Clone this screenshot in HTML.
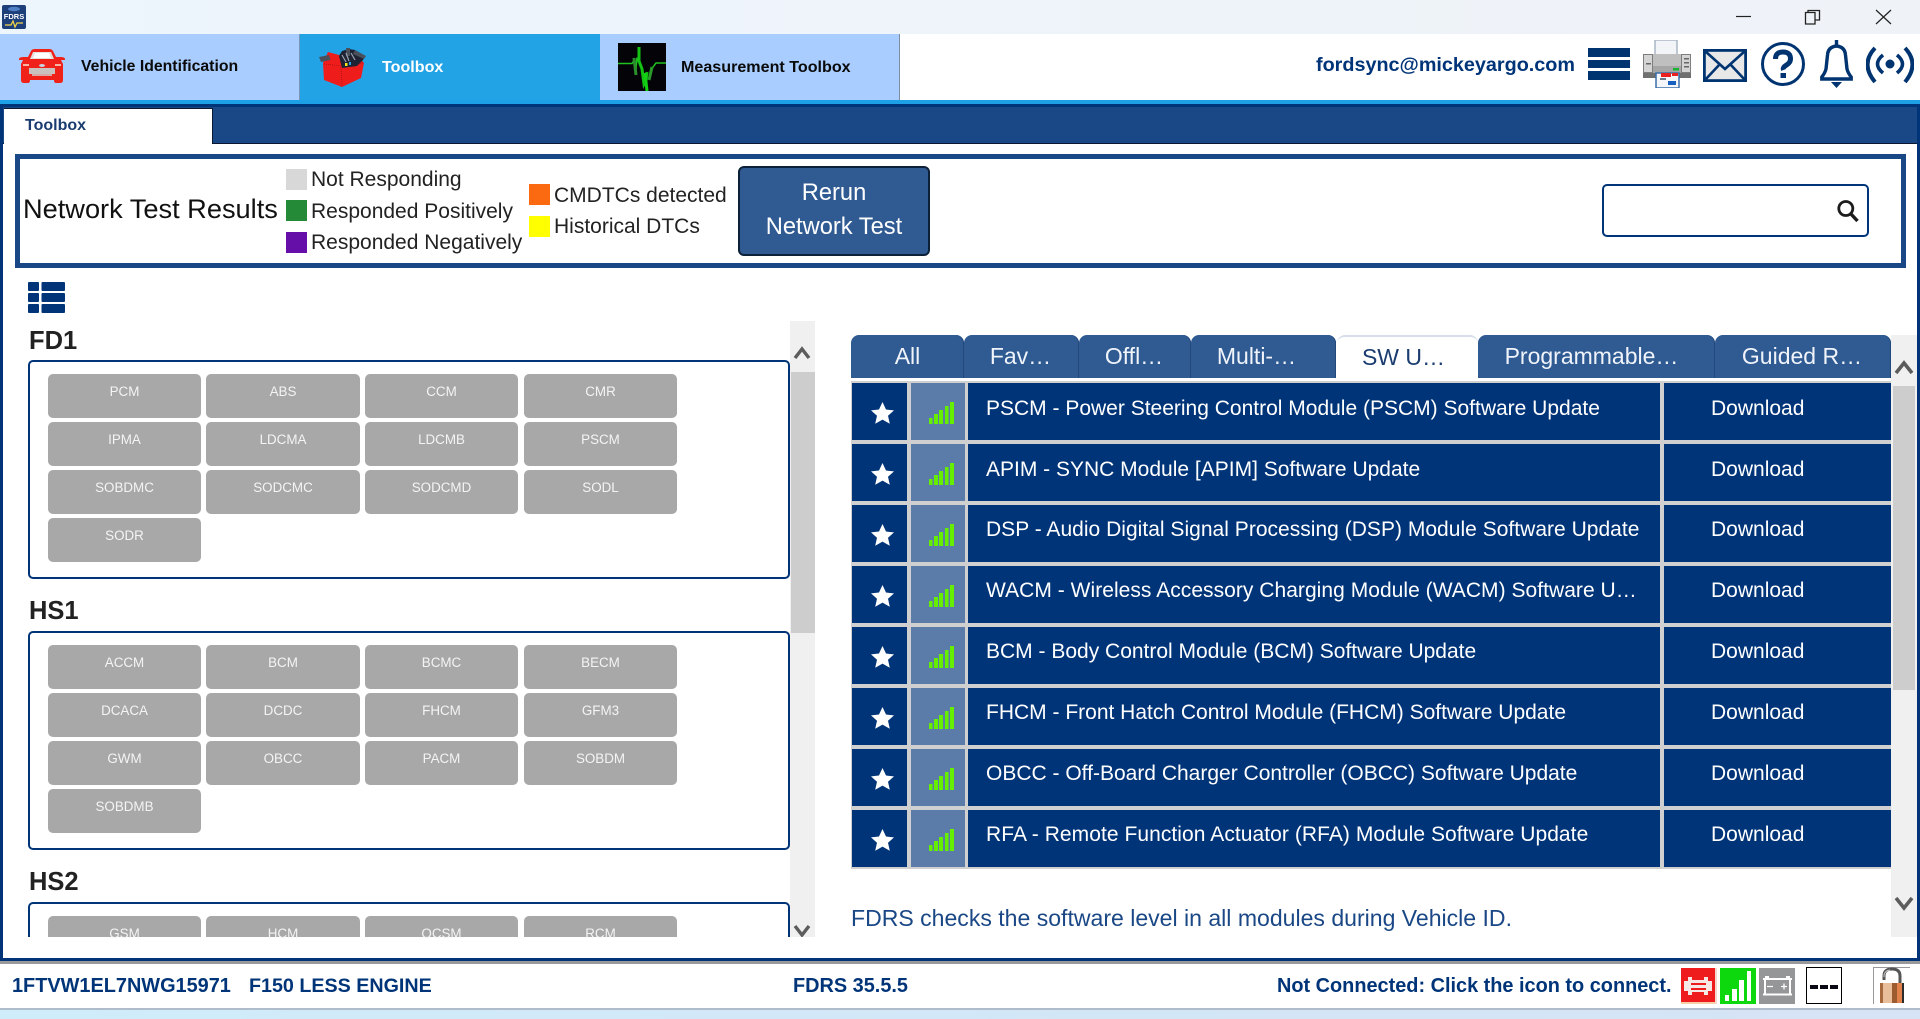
<!DOCTYPE html>
<html><head><meta charset="utf-8"><title>FDRS</title>
<style>
html,body{margin:0;padding:0;background:#fff;width:1920px;height:1019px;overflow:hidden}
#w{position:absolute;left:0;top:0;width:1920px;height:1019px;overflow:hidden}
body{font-family:"Liberation Sans",Arial,sans-serif}
.a,.t,.b,.r,.tab,svg{position:absolute}
.t{white-space:nowrap}
.b{width:153px;height:44px;background:#a8a8a8;border-radius:5px;color:#f4f4f4;font-size:13.4px;line-height:36px;text-align:center}
.c2{width:154px}
.cut{height:21px;border-radius:5px 5px 0 0}
.box{position:absolute;left:28px;width:758px;height:215px;border:2px solid #003478;border-radius:5px}
.h{position:absolute;left:29px;font-weight:bold;font-size:25.5px;line-height:30px;color:#222}
.tab{top:335px;height:43px;background:#2f5a92;border-radius:8px 8px 0 0;color:#f0f4fa;font-size:23px;line-height:42px;text-align:center;box-sizing:border-box;box-shadow:inset -1px 0 0 #23497c}
.sq{position:absolute;width:21px;height:21px}
.lg{position:absolute;font-size:21px;line-height:26px;color:#222;white-space:nowrap}
.r{left:852px;width:1039px;height:57px;background:#003478;color:#fff;font-size:21px}
.r i{position:absolute;top:0;height:57px;width:4px;background:#d0d0d0}
.r i.m{width:3px}
.r u{position:absolute;left:59px;top:0;width:54px;height:57px;background:#5b7ca8}
.r span{position:absolute;top:11px;line-height:28px;white-space:nowrap}
.r.p span{top:12px}
.r .n{left:134px}.r .d{left:859px}
.st{color:#003478;font-weight:bold;font-size:19.9px;line-height:24px}
</style></head><body><div id="w">

<!-- title bar -->
<div class="a" style="left:0;top:0;width:1920px;height:34px;background:linear-gradient(90deg,#edf5fd,#eff2f7)"></div>
<svg style="left:2px;top:5px" width="24" height="24" viewBox="0 0 24 24"><rect width="24" height="24" rx="2" fill="#1d3f7a"/><ellipse cx="12" cy="4" rx="6" ry="2.2" fill="#4f7fc4"/><text x="12" y="14" font-size="7.5" font-weight="bold" fill="#fff" text-anchor="middle" font-family="Liberation Sans">FDRS</text><path d="M3 20h6l2-4 2 6 2-4h6" fill="none" stroke="#f4d64a" stroke-width="1.2"/></svg>
<svg style="left:1730px;top:5px" width="180" height="24" viewBox="0 0 180 24"><path d="M6 11.500h15" stroke="#222" stroke-width="1.2"/><path d="M75.500 7.500h9.500v11.500h-9.500zM78 7.500V5.500h11.500v9.500h-4.500" fill="none" stroke="#222" stroke-width="1.300"/><path d="M146 5l15 14M161 5l-15 14" stroke="#222" stroke-width="1.200"/></svg>

<!-- nav -->
<div class="a" style="left:0;top:34px;width:1920px;height:66px;background:#fff"></div>
<div class="a" style="left:0;top:34px;width:299px;height:66px;background:#a9cdfe"></div>
<div class="a" style="left:299px;top:34px;width:301px;height:66px;background:#22a3e6;border-left:1px solid #7a97b8;box-sizing:border-box"></div>
<div class="a" style="left:600px;top:34px;width:300px;height:66px;background:#a9cdfe;border-right:1px solid #7f8fa3;box-sizing:border-box"></div>
<div class="a" style="left:0;top:100px;width:1920px;height:4px;background:#1ea0e6"></div>

<svg style="left:19px;top:49px" width="46" height="34" viewBox="0 0 46 34"><path d="M9 8L12 2Q13 0 16 0H30Q33 0 34 2L37 8H41Q46 8 46 10V11H42L44 15V31Q44 34 41 34H37Q35 34 35 31H11Q11 34 9 34H5Q2 34 2 31V15L4 11H0V10Q0 8 5 8Z" fill="#ef2118"/><path d="M11 10L14 3H32L35 10Z" fill="#e4e0dc"/><path d="M16 4H30L32 9H14Z" fill="#fff"/><rect x="10" y="19" width="26" height="6" fill="#c9c2be"/><rect x="13" y="25" width="20" height="2" fill="#d8a9a4"/><ellipse cx="23" cy="16.500" rx="3" ry="1.500" fill="#c7d2e2"/><rect x="4" y="15" width="6" height="2" fill="#f7b5a5"/><rect x="36" y="15" width="6" height="2" fill="#f7b5a5"/></svg>
<div class="t" style="left:81px;top:55px;font-weight:bold;font-size:15.8px;line-height:24px;color:#0a0a0a">Vehicle Identification</div>

<svg style="left:319px;top:48px" width="47" height="40" viewBox="0 0 47 40"><path d="M9 4L20 7H38L45 15 42 30 23 39 5 32 4 15Z" fill="#ef1c1c"/><path d="M23 38L22 18M5 16L22 18L44 15" fill="none" stroke="#a81414" stroke-width=".8" stroke-dasharray="1 1"/><path d="M20 8L23 3 30 1 36 2 46 8 44 12 38 18 23 20Z" fill="#1e2233"/><path d="M0 9L10 7 11.500 12 2 14ZM36 2L47 8 45 11 34 6ZM27 0H31V8H27Z" fill="#4a4f5c"/><rect x="26" y="15" width="2.500" height="3" fill="#f5e71a"/><rect x="30" y="14" width="2" height="3" fill="#2aa0e0"/><path d="M23 7L27 14M27 5L30 13M32 5L36 12" stroke="#9aa3ad" stroke-width="1.200"/></svg>
<div class="t" style="left:382px;top:55px;font-weight:bold;font-size:16.1px;line-height:24px;color:#fff">Toolbox</div>

<svg style="left:618px;top:43px" width="48" height="48" viewBox="0 0 48 48"><rect width="48" height="48" fill="#040408"/><path d="M0 20.500h14l2-3 2 9 1-12M31 36l2-7 2-5 3-4h10" fill="none" stroke="#1fc21f" stroke-width="1.500"/><path d="M16 15l2 17" stroke="#2b8f2b" stroke-width="3"/><path d="M21 4V18l3 8 2 15 2-4 1-8" fill="none" stroke="#13c213" stroke-width="3"/><path d="M27 30l2 18" stroke="#13d213" stroke-width="3"/><path d="M31 37l3-13" stroke="#2a9a2a" stroke-width="3"/></svg>
<div class="t" style="left:681px;top:55px;font-weight:bold;font-size:16.1px;line-height:24px;color:#0a0a0a">Measurement Toolbox</div>

<div class="t" style="left:1316px;top:53px;font-weight:bold;font-size:19.8px;line-height:24px;color:#003478">fordsync@mickeyargo.com</div>
<div class="a" style="left:1588px;top:48px;width:42px;height:9px;background:#003470"></div>
<div class="a" style="left:1588px;top:60px;width:42px;height:8px;background:#003470"></div>
<div class="a" style="left:1588px;top:71px;width:42px;height:9px;background:#003470"></div>

<svg style="left:1643px;top:40px" width="48" height="48" viewBox="0 0 48 48"><rect x="12" y="0" width="22" height="17" fill="#f2f4f8" stroke="#a9b5c4" stroke-width="1.500"/><rect x="0" y="14" width="48" height="24" fill="#7e7e7e"/><rect x="10" y="14" width="28" height="24" fill="#a6a6a6"/><rect x="10" y="14" width="28" height="12" fill="#bfbfbf"/><rect x="1" y="15" width="8" height="17" fill="#d4d4d4"/><rect x="39" y="15" width="8" height="17" fill="#d4d4d4"/><rect x="3" y="23" width="5" height="1.500" fill="#666"/><rect x="41" y="18" width="5" height="1.500" fill="#666"/><rect x="41" y="22" width="5" height="1.500" fill="#666"/><rect x="41" y="26" width="5" height="1.500" fill="#666"/><rect x="30" y="28" width="6" height="2.500" fill="#15b530"/><rect x="0" y="33" width="48" height="5" fill="#6f6f6f"/><rect x="13" y="33" width="23" height="15" fill="#f4f6fa" stroke="#3b6fa8" stroke-width="1.500"/><rect x="18" y="33" width="10" height="4" fill="#ea2020"/><rect x="29" y="33" width="6" height="3" fill="#ea2020"/><rect x="17" y="38" width="6" height="2" fill="#6b7a8a"/><rect x="25" y="41" width="8" height="4" fill="#1860c0"/></svg>

<svg style="left:1703px;top:49px" width="44" height="33" viewBox="0 0 44 33"><rect x="1.400" y="1.400" width="41.200" height="30.200" fill="#e8e8e8" stroke="#003470" stroke-width="2.800"/><path d="M2 2L22 20 42 2M2 31L17 15M42 31L27 15" fill="none" stroke="#003470" stroke-width="2.600"/></svg>

<svg style="left:1761px;top:42px" width="44" height="44" viewBox="0 0 44 44"><circle cx="22" cy="22" r="20.500" fill="#fff" stroke="#003470" stroke-width="3"/><path d="M14.500 17Q14.500 10 22 10T29.500 17Q29.500 20.500 25.500 23T22.500 28" fill="none" stroke="#003470" stroke-width="5"/><rect x="19.500" y="31" width="5.500" height="5" fill="#003470"/></svg>

<svg style="left:1820px;top:40px" width="33" height="48" viewBox="0 0 33 48"><path d="M16.500 0L16.500 6M16.500 6Q8 7 7.500 15L6 29Q5 33 1.800 37V39H31.200V37Q28 33 27 29L25.500 15Q25 7 16.500 6Z" fill="none" stroke="#003470" stroke-width="3.400"/><path d="M11 42H22L16.500 48Z" fill="#003470"/></svg>

<svg style="left:1866px;top:42px" width="48" height="44" viewBox="0 0 48 44"><circle cx="24" cy="22" r="4.500" fill="#003470"/><g fill="none" stroke="#003470" stroke-width="3.600"><path d="M17 13Q6 22 17 31M31 13Q42 22 31 31"/><path d="M9 6Q-6 22 9 40M39 6Q54 22 39 40" stroke-width="4"/></g></svg>

<!-- frame -->
<div class="a" style="left:0;top:104px;width:1920px;height:857px;background:#003478"></div>
<div class="a" style="left:3px;top:107px;width:1914px;height:851px;background:#fff"></div>
<div class="a" style="left:3px;top:107px;width:1914px;height:36px;background:#1a4785;border-bottom:1px solid #0b1830"></div>
<div class="a" style="left:4px;top:108px;width:208px;height:36px;background:#fff;border-top:1px solid #0b1830;box-sizing:border-box;box-shadow:1px 0 0 #0b1830"></div>
<div class="t" style="left:25px;top:114px;font-weight:bold;font-size:16px;line-height:24px;color:#1a3c70">Toolbox</div>

<!-- network panel -->
<div class="a" style="left:15px;top:154px;width:1891px;height:114px;border:5px solid #1a4785;box-sizing:border-box"></div>
<div class="t" style="left:23px;top:192px;font-size:27.200px;line-height:34px;color:#111">Network Test Results</div>
<div class="sq" style="left:286px;top:169px;background:#d8d8d8"></div>
<div class="sq" style="left:286px;top:200px;background:#258a38"></div>
<div class="sq" style="left:286px;top:232px;background:#660ea8"></div>
<div class="lg" style="left:311px;top:167px">Not Responding</div>
<div class="lg" style="left:311px;top:199px">Responded Positively</div>
<div class="lg" style="left:311px;top:230px">Responded Negatively</div>
<div class="sq" style="left:529px;top:184px;background:#fb6a10"></div>
<div class="sq" style="left:529px;top:216px;background:#ffff00"></div>
<div class="lg" style="left:554px;top:183px">CMDTCs detected</div>
<div class="lg" style="left:554px;top:214px">Historical DTCs</div>
<div class="a" style="left:738px;top:166px;width:192px;height:90px;background:#2f5a92;border:2px solid #0c2138;border-radius:6px;box-sizing:border-box;color:#fff;font-size:23.700px;line-height:34px;text-align:center;padding-top:8px">Rerun<br>Network Test</div>
<div class="a" style="left:1602px;top:184px;width:267px;height:53px;border:2px solid #003478;border-radius:5px;box-sizing:border-box;background:#fff"></div>
<svg style="left:1836px;top:199px" width="24" height="24" viewBox="0 0 24 24"><circle cx="9.800" cy="9.500" r="7" fill="none" stroke="#1c1c1c" stroke-width="2.800"/><path d="M15 15L21.500 22" stroke="#1c1c1c" stroke-width="3.400"/></svg>

<!-- grid icon -->
<svg style="left:28px;top:282px" width="37" height="31" viewBox="0 0 37 31" fill="#003478"><rect x="0" y="0" width="11" height="9" rx="1"/><rect x="13.500" y="0" width="23.500" height="9" rx="1"/><rect x="0" y="11" width="11" height="9" rx="1"/><rect x="13.500" y="11" width="23.500" height="9" rx="1"/><rect x="0" y="22" width="11" height="9" rx="1"/><rect x="13.500" y="22" width="23.500" height="9" rx="1"/></svg>

<!-- left list -->
<div class="h" style="top:326px">FD1</div>
<div class="box" style="top:360px"></div>
<div class="b" style="left:48px;top:374px">PCM</div><div class="b c2" style="left:206px;top:374px">ABS</div><div class="b" style="left:365px;top:374px">CCM</div><div class="b" style="left:524px;top:374px">CMR</div>
<div class="b" style="left:48px;top:422px">IPMA</div><div class="b c2" style="left:206px;top:422px">LDCMA</div><div class="b" style="left:365px;top:422px">LDCMB</div><div class="b" style="left:524px;top:422px">PSCM</div>
<div class="b" style="left:48px;top:470px">SOBDMC</div><div class="b c2" style="left:206px;top:470px">SODCMC</div><div class="b" style="left:365px;top:470px">SODCMD</div><div class="b" style="left:524px;top:470px">SODL</div>
<div class="b" style="left:48px;top:518px">SODR</div>
<div class="h" style="top:596px">HS1</div>
<div class="box" style="top:631px"></div>
<div class="b" style="left:48px;top:645px">ACCM</div><div class="b c2" style="left:206px;top:645px">BCM</div><div class="b" style="left:365px;top:645px">BCMC</div><div class="b" style="left:524px;top:645px">BECM</div>
<div class="b" style="left:48px;top:693px">DCACA</div><div class="b c2" style="left:206px;top:693px">DCDC</div><div class="b" style="left:365px;top:693px">FHCM</div><div class="b" style="left:524px;top:693px">GFM3</div>
<div class="b" style="left:48px;top:741px">GWM</div><div class="b c2" style="left:206px;top:741px">OBCC</div><div class="b" style="left:365px;top:741px">PACM</div><div class="b" style="left:524px;top:741px">SOBDM</div>
<div class="b" style="left:48px;top:789px">SOBDMB</div>
<div class="h" style="top:867px">HS2</div>
<div class="box" style="top:902px;height:33px;border-bottom:0;border-radius:5px 5px 0 0"></div>
<div class="b cut" style="left:48px;top:916px">GSM</div><div class="b c2 cut" style="left:206px;top:916px">HCM</div><div class="b cut" style="left:365px;top:916px">OCSM</div><div class="b cut" style="left:524px;top:916px">RCM</div>
<div class="a" style="left:790px;top:321px;width:25px;height:616px;background:#f0f0f0"></div>
<div class="a" style="left:791px;top:372px;width:24px;height:261px;background:#cdcdcd"></div>
<svg style="left:793px;top:345px" width="18" height="16" viewBox="0 0 18 16"><path d="M2 13L9 4l7 9" fill="none" stroke="#5c5c5c" stroke-width="3.400"/></svg>
<svg style="left:793px;top:923px" width="18" height="14" viewBox="0 0 18 14"><path d="M2 3l7 9 7-9" fill="none" stroke="#5c5c5c" stroke-width="3.400"/></svg>

<!-- tabs -->
<div class="tab" style="left:851px;width:113px">All</div>
<div class="tab" style="left:964px;width:115px;padding-right:2px">Fav…</div>
<div class="tab" style="left:1079px;width:112px;padding-right:2px">Offl…</div>
<div class="tab" style="left:1191px;width:145px;padding-right:14px">Multi-…</div>
<div class="tab" style="left:1337px;width:141px;background:#fff;color:#1a3c70;border-top:2px solid #d6dfe9;line-height:40px;box-shadow:none;padding-right:8px">SW U…</div>
<div class="tab" style="left:1478px;width:237px;padding-right:10px">Programmable…</div>
<div class="tab" style="left:1715px;width:176px;padding-right:2px">Guided R…</div>

<!-- rows -->
<div class="a" style="left:851px;top:381px;width:1040px;height:488px;background:#d0d0d0"></div>
<div class="r p" style="top:383px"><u></u><i style="left:55px"></i><i class="m" style="left:113px"></i><i style="left:808px"></i><span class="n">PSCM - Power Steering Control Module (PSCM) Software Update</span><span class="d">Download</span></div>
<div class="r p" style="top:444px"><u></u><i style="left:55px"></i><i class="m" style="left:113px"></i><i style="left:808px"></i><span class="n">APIM - SYNC Module [APIM] Software Update</span><span class="d">Download</span></div>
<div class="r" style="top:505px"><u></u><i style="left:55px"></i><i class="m" style="left:113px"></i><i style="left:808px"></i><span class="n" style="letter-spacing:.02px">DSP - Audio Digital Signal Processing (DSP) Module Software Update</span><span class="d">Download</span></div>
<div class="r" style="top:566px"><u></u><i style="left:55px"></i><i class="m" style="left:113px"></i><i style="left:808px"></i><span class="n" style="letter-spacing:.04px">WACM - Wireless Accessory Charging Module (WACM) Software U…</span><span class="d">Download</span></div>
<div class="r" style="top:627px"><u></u><i style="left:55px"></i><i class="m" style="left:113px"></i><i style="left:808px"></i><span class="n">BCM - Body Control Module (BCM) Software Update</span><span class="d">Download</span></div>
<div class="r" style="top:688px"><u></u><i style="left:55px"></i><i class="m" style="left:113px"></i><i style="left:808px"></i><span class="n">FHCM - Front Hatch Control Module (FHCM) Software Update</span><span class="d">Download</span></div>
<div class="r" style="top:749px"><u></u><i style="left:55px"></i><i class="m" style="left:113px"></i><i style="left:808px"></i><span class="n">OBCC - Off-Board Charger Controller (OBCC) Software Update</span><span class="d">Download</span></div>
<div class="r" style="top:810px"><u></u><i style="left:55px"></i><i class="m" style="left:113px"></i><i style="left:808px"></i><span class="n" style="letter-spacing:.06px">RFA - Remote Function Actuator (RFA) Module Software Update</span><span class="d">Download</span></div>

<!-- stars and signal bars -->
<svg style="left:852px;top:383px" width="110" height="484" viewBox="0 0 110 484">
<defs><g id="s"><path d="M30.500 19l3.500 7.500 8 .9-6 5.400 1.800 8-7.300-4.200-7.300 4.200 1.800-8-6-5.400 8-.9z" fill="#fff"/><g fill="#66ee00"><rect x="77" y="35" width="3.500" height="6"/><rect x="82" y="31" width="4" height="10"/><rect x="87" y="27" width="4" height="14"/><rect x="93" y="23" width="3.500" height="18"/><rect x="98" y="19" width="4" height="22"/></g></g></defs>
<use href="#s"/><use href="#s" y="61"/><use href="#s" y="122"/><use href="#s" y="183"/><use href="#s" y="244"/><use href="#s" y="305"/><use href="#s" y="366"/><use href="#s" y="427"/>
</svg>

<div class="t" style="left:851px;top:904px;font-size:23.050px;line-height:28px;color:#1a4785">FDRS checks the software level in all modules during Vehicle ID.</div>

<!-- right scrollbar -->
<div class="a" style="left:1891px;top:335px;width:26px;height:602px;background:#f0f0f0"></div>
<div class="a" style="left:1893px;top:386px;width:22px;height:304px;background:#cdcdcd"></div>
<svg style="left:1894px;top:358px" width="20" height="18" viewBox="0 0 20 18"><path d="M2 15L10 5l8 10" fill="none" stroke="#5c5c5c" stroke-width="3.600"/></svg>
<svg style="left:1894px;top:895px" width="20" height="18" viewBox="0 0 20 18"><path d="M2 3l8 10 8-10" fill="none" stroke="#5c5c5c" stroke-width="3.600"/></svg>

<!-- status bar -->
<div class="a" style="left:0;top:961px;width:1920px;height:3px;background:#999"></div>
<div class="a" style="left:0;top:964px;width:1920px;height:44px;background:#fff"></div>
<div class="a" style="left:0;top:1008px;width:1920px;height:2px;background:#aebccb"></div>
<div class="a" style="left:0;top:1010px;width:1920px;height:9px;background:linear-gradient(90deg,#cfecfb,#d3e6f6 60%,#d6e4f5)"></div>
<div class="t st" style="left:12px;top:974px">1FTVW1EL7NWG15971</div>
<div class="t st" style="left:249px;top:974px;font-size:19.7px">F150 LESS ENGINE</div>
<div class="t st" style="left:793px;top:974px">FDRS 35.5.5</div>
<div class="t st" style="left:1277px;top:974px">Not Connected: Click the icon to connect.</div>

<svg style="left:1681px;top:968px" width="36" height="36" viewBox="0 0 36 36"><rect width="34" height="34" fill="#ee1c1c"/><rect y="34" width="34" height="2" fill="#f5cfa8"/><rect x="34" width="2" height="36" fill="#f3d8cc"/><path d="M3 13h4v-4h4v3h12v-3h4v4h4v10h-4v4h-4v-3h-12v3h-4v-4h-4z" fill="#f6e8e4"/><rect x="10" y="15" width="15" height="2" fill="#ee1c1c"/><rect x="10" y="20" width="15" height="2" fill="#ee1c1c"/></svg>
<svg style="left:1720px;top:968px" width="36" height="36" viewBox="0 0 36 36"><rect width="36" height="36" fill="#0dd80d"/><rect x="5" y="27" width="4" height="6" fill="#fff"/><rect x="12" y="21" width="5" height="12" fill="#fff"/><rect x="19" y="12" width="5" height="21" fill="#fff"/><rect x="27" y="3" width="4" height="30" fill="#fff"/></svg>
<svg style="left:1759px;top:968px" width="36" height="36" viewBox="0 0 36 36"><rect width="36" height="36" fill="#949697"/><path d="M4 11h29M4 26.500h29M6 11v15M31 11v15" fill="none" stroke="#fff" stroke-width="2"/><rect x="6" y="8" width="4" height="3" fill="#fff"/><rect x="27" y="8" width="4" height="3" fill="#fff"/><path d="M8 18.500h6M22 18.500h6M25 15.500v6" stroke="#fff" stroke-width="1.300"/></svg>
<div class="a" style="left:1806px;top:967px;width:36px;height:37px;border:1.500px solid #000;box-sizing:border-box;background:#fff"></div>
<div class="a" style="left:1810px;top:985px;width:8px;height:4px;background:#0a0a14"></div>
<div class="a" style="left:1820px;top:985px;width:8px;height:4px;background:#0a0a14"></div>
<div class="a" style="left:1830px;top:985px;width:8px;height:4px;background:#0a0a14"></div>
<svg style="left:1873px;top:967px" width="37" height="37" viewBox="0 0 37 37"><path d="M.5 37V0.500H37" fill="none" stroke="#999" stroke-width="1"/><path d="M11 13V9Q11 2 19 2T27 9V16" fill="none" stroke="#555" stroke-width="3"/><path d="M11 10V8Q12 3.500 17 3" fill="none" stroke="#ccc" stroke-width="1"/><rect x="7" y="16" width="24" height="20" fill="#e8bf9a"/><rect x="7" y="16" width="3" height="20" fill="#a86a3c"/><rect x="19" y="16" width="5" height="20" fill="#9c5c30"/><rect x="24" y="16" width="7" height="20" fill="#e0824a"/><rect x="29" y="16" width="2" height="20" fill="#2c2c2c"/></svg>

</div></body></html>
